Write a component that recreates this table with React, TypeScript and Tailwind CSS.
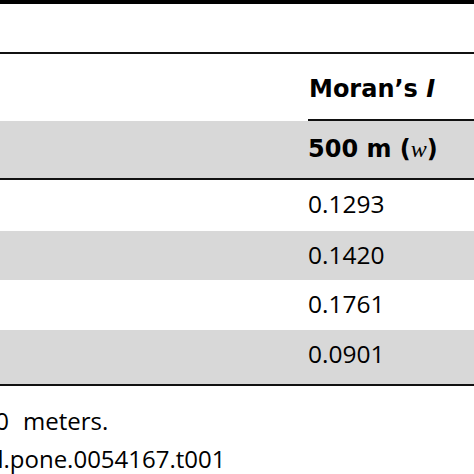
import React from 'react';

const rows = [
  { value: '0.1293', gray: false, h: 'h-[51px]' },
  { value: '0.1420', gray: true, h: 'h-[49px]' },
  { value: '0.1761', gray: false, h: 'h-[50px]' },
  { value: '0.0901', gray: true, h: 'h-[54px]' },
];

export default function App() {
  return (
    <div className="w-[474px] h-[474px] overflow-hidden bg-white text-[24px] leading-[24px] text-black font-['Open_Sans',sans-serif]">
      {/* table top rule */}
      <div className="h-[4px] bg-black" />
      <div className="h-[48px]" />
      <div className="h-[2px] bg-[#111]" />

      {/* header row 1 */}
      <div className="grid grid-cols-[308px_1fr]">
        <div className="h-[67px]" />
        <div className="h-[67px] border-b-2 border-[#111] pt-[23px] pl-[1px] font-bold font-['DejaVu_Sans',sans-serif]">
          Moran’s <span className="italic">I</span>
        </div>
      </div>

      {/* header row 2 */}
      <div className="grid grid-cols-[308px_1fr] bg-[#d8d8d8] h-[57px]">
        <div />
        <div className="pt-[16px] font-bold font-['DejaVu_Sans',sans-serif]">
          500 m (<span className="italic font-normal font-['Liberation_Serif',serif]">w</span>)
        </div>
      </div>
      <div className="h-[2px] bg-[#111]" />

      {/* data rows */}
      {rows.map((r) => (
        <div
          key={r.value}
          className={`grid grid-cols-[308px_1fr] ${r.h} ${r.gray ? 'bg-[#d8d8d8]' : 'bg-white'}`}
        >
          <div />
          <div className="pt-[12px] text-[24.5px]">{r.value}</div>
        </div>
      ))}
      <div className="h-[2px] bg-[#111]" />

      {/* footnotes */}
      <div className="mt-[23px] flex whitespace-nowrap">
        <div className="flex justify-end w-[9px] overflow-hidden shrink-0">
          <span>Distance band of 500</span>
        </div>
        <span className="ml-[14px]">meters.</span>
      </div>
      <div className="mt-[14px] flex whitespace-nowrap">
        <div className="flex justify-end w-[3.5px] overflow-hidden shrink-0">
          <span>doi:10.1371/journal</span>
        </div>
        <span>.pone.0054167.t001</span>
      </div>
    </div>
  );
}
